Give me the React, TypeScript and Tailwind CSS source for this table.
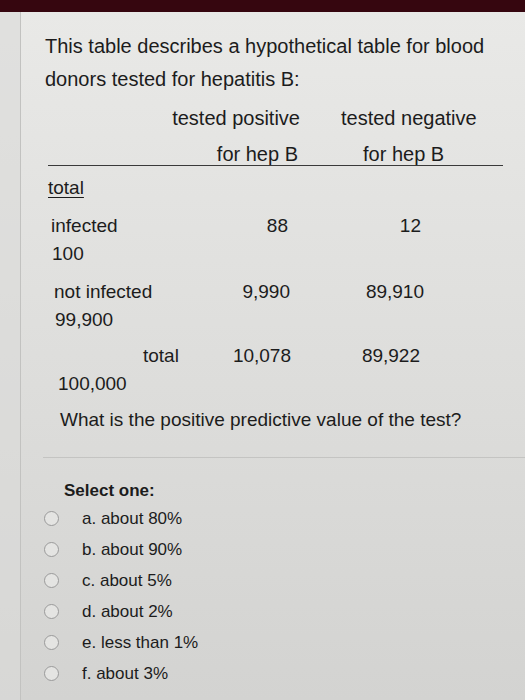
const options = [
  "a. about 80%",
  "b. about 90%",
  "c. about 5%",
  "d. about 2%",
  "e. less than 1%",
  "f. about 3%",
];

function Radio() {
  return (
    <span className="h-[15px] w-[15px] shrink-0 rounded-full border border-[#9a9a9a] bg-[#e4e4e2]" />
  );
}

export default function App() {
  return (
    <div
      className="flex h-[700px] w-[525px] flex-col overflow-hidden bg-[#dcdcda] text-[#1c1c1c]"
      style={{ fontFamily: '"Liberation Sans", Arial, sans-serif' }}
    >
      <div className="h-[12px] shrink-0 bg-[#36060f]" />
      <div className="flex flex-1 bg-linear-to-b from-[#e9e9e7] to-[#d3d3d1]">
        {/* left page edge */}
        <div className="w-[21px] shrink-0 border-r border-[#c2c2c0] bg-[#dadad8]/60" />

        <div className="flex flex-1 flex-col">
          <div className="pl-[24px] pr-[30px] pt-[18px]">
            <p className="text-[20px] leading-[33px]">
              This table describes a hypothetical table for blood donors tested for hepatitis B:
            </p>

            <div className="ml-[3px] w-[455px]">
              {/* header */}
              <div className="mt-[3px] grid h-[38px] grid-cols-[120px_150px_185px] items-center text-[20px]">
                <span />
                <span className="whitespace-nowrap text-right pr-[18px]">tested positive</span>
                <span className="whitespace-nowrap pl-[23px]">tested negative</span>
              </div>
              <div className="grid h-[29px] grid-cols-[120px_150px_185px] items-end border-b border-[#3a3a3a] pb-[1px] text-[20px] leading-[20px]">
                <span />
                <span className="text-right pr-[20px]">for hep B</span>
                <span className="pl-[45px]">for hep B</span>
              </div>

              <div className="mt-[8px] h-[28px] text-[19px] leading-[28px]">
                <span className="underline underline-offset-[3px]">total</span>
              </div>

              <div className="mt-[10px] grid h-[28px] grid-cols-[120px_150px_185px] text-[19px] leading-[28px]">
                <span className="pl-[3px]">infected</span>
                <span className="text-right pr-[30px]">88</span>
                <span className="text-right pr-[82px]">12</span>
              </div>
              <div className="h-[28px] pl-[4px] text-[19px] leading-[28px]">100</div>

              <div className="mt-[10px] grid h-[28px] grid-cols-[120px_150px_185px] text-[19px] leading-[28px]">
                <span className="whitespace-nowrap pl-[6px]">not infected</span>
                <span className="text-right pr-[28px]">9,990</span>
                <span className="text-right pr-[79px]">89,910</span>
              </div>
              <div className="h-[28px] pl-[7px] text-[19px] leading-[28px]">99,900</div>

              <div className="mt-[8px] grid h-[28px] grid-cols-[120px_150px_185px] text-[19px] leading-[28px]">
                <span className="whitespace-nowrap pl-[95px]">total</span>
                <span className="text-right pr-[27px]">10,078</span>
                <span className="text-right pr-[83px]">89,922</span>
              </div>
              <div className="h-[28px] pl-[10px] text-[19px] leading-[28px]">100,000</div>

              <p className="mt-[8px] h-[28px] whitespace-nowrap pl-[12px] text-[19px] leading-[28px]">
                What is the positive predictive value of the test?
              </p>
            </div>
          </div>

          <div className="ml-[22px] mt-[23px] border-t border-[#c4c4c2]" />

          <div className="pl-[43px] pt-[21px]">
            <p className="h-[24px] text-[17px] font-bold leading-[24px]">Select one:</p>
            <ul className="-ml-[20px]">
              {options.map((o) => (
                <li key={o} className="flex h-[31px] items-center gap-[23px] text-[17px]">
                  <Radio />
                  <span>{o}</span>
                </li>
              ))}
            </ul>
          </div>
        </div>
      </div>
    </div>
  );
}
